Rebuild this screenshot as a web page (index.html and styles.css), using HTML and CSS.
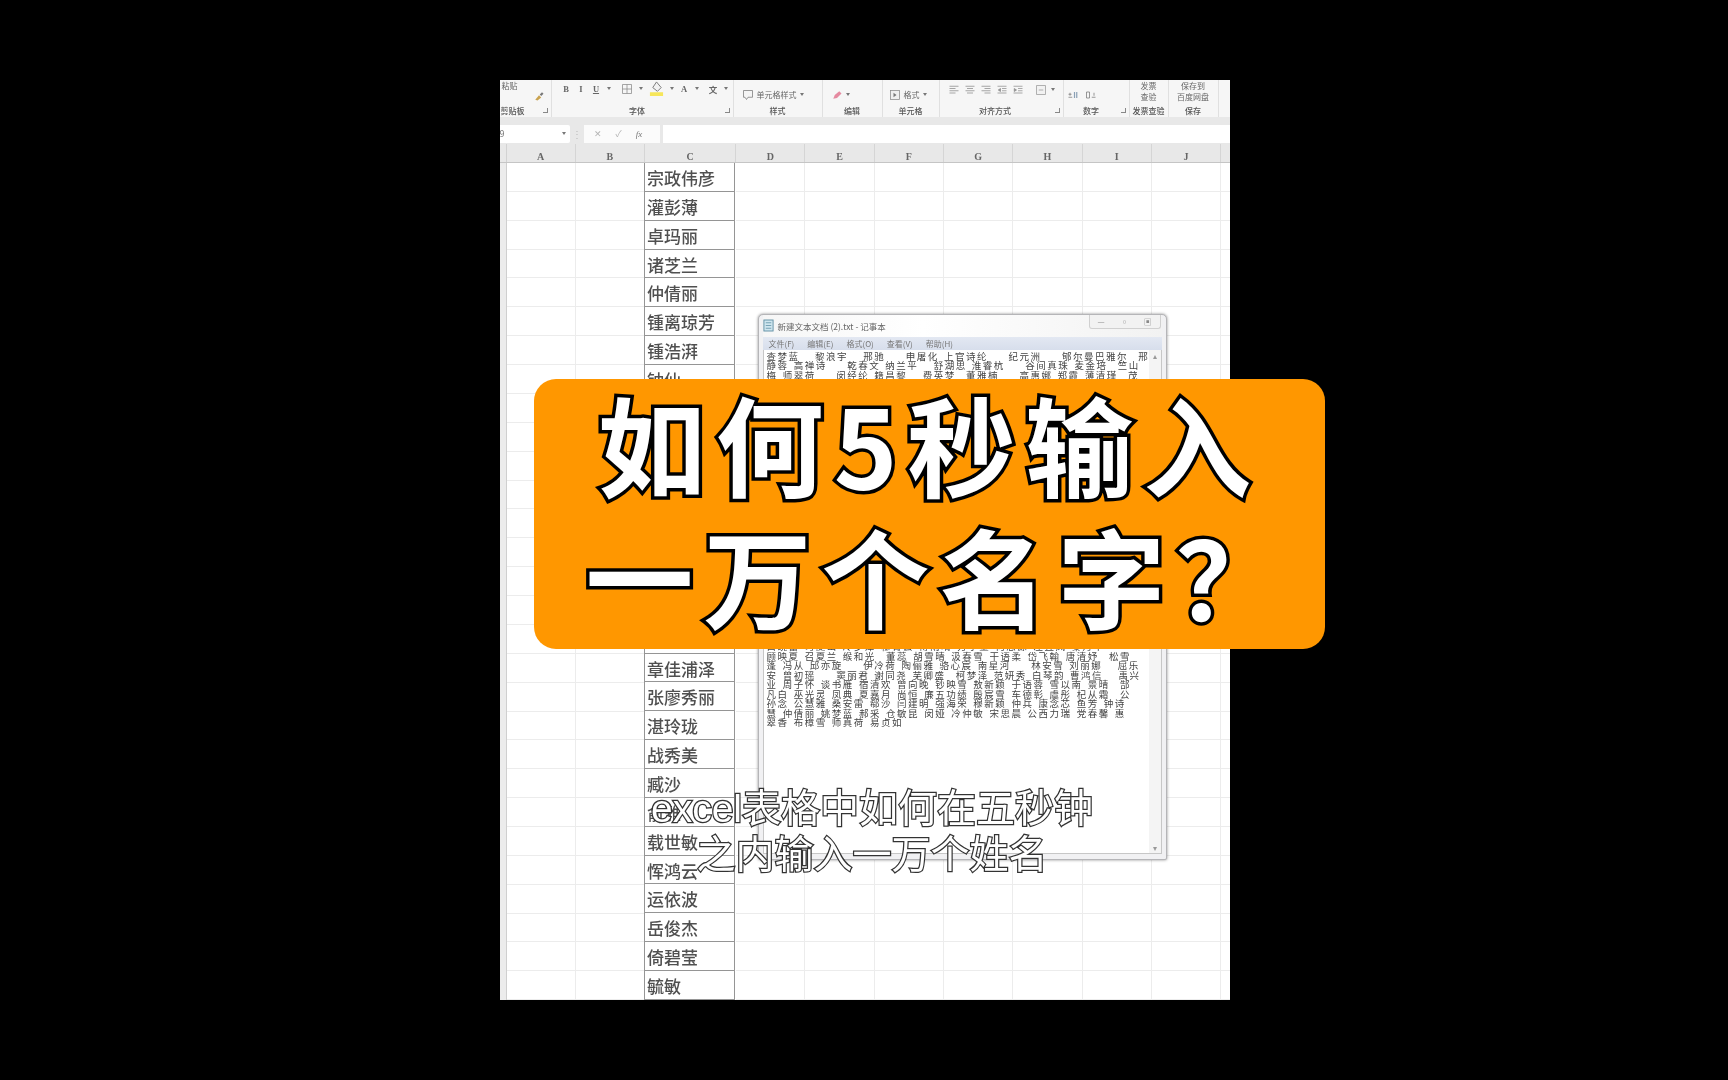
FILE: index.html
```html
<!DOCTYPE html>
<html lang="zh-CN">
<head>
<meta charset="utf-8">
<title>如何5秒输入一万个名字？</title>
<link rel="stylesheet" href="styles.css">
</head>
<body>
<main class="stage">
  <section class="screen">
    <div class="ribbon">
      <div class="group g-clip">
        <div class="tools"><span class="mini paste">粘贴</span>
          <svg class="ic brush" viewBox="0 0 16 16"><path d="M3 13l5-6 3 3-5 4z" fill="#c9a24e"/><path d="M9 6l3-3 2 2-3 3z" fill="#777"/></svg></div>
        <div class="label">剪贴板<i class="launch"></i></div>
      </div>
      <div class="group g-font">
        <div class="tools font-tools">
          <b class="t">B</b><i class="t">I</i><u class="t">U</u><span class="drop"></span>
          <svg class="ic grid-ic" viewBox="0 0 16 16"><path d="M2 2h12v12H2zM8 2v12M2 8h12" fill="none" stroke="#8a8a8a"/></svg><span class="drop"></span>
          <svg class="ic bucket" viewBox="0 0 16 16"><path d="M8 1l5 6-4 4-5-4z" fill="#f2f2f2" stroke="#777"/><rect x="1" y="12" width="14" height="4" fill="#f6e65a"/></svg><span class="drop"></span>
          <b class="t">A</b><span class="drop"></span>
          <span class="t wen">文</span><span class="drop"></span>
        </div>
        <div class="label">字体<i class="launch"></i></div>
      </div>
      <div class="group g-style">
        <div class="tools"><svg class="ic" viewBox="0 0 16 16"><path d="M2 2h12v9H8l-2 3-2-3H2z" fill="#f4f4f4" stroke="#777"/></svg><span class="mini">单元格样式</span><span class="drop"></span></div>
        <div class="label">样式</div>
      </div>
      <div class="group g-edit">
        <div class="tools"><svg class="ic" viewBox="0 0 16 16"><path d="M3 13l2-5 6-5 3 3-6 6z" fill="#e58aa0"/></svg><span class="drop"></span></div>
        <div class="label">编辑</div>
      </div>
      <div class="group g-cell">
        <div class="tools"><svg class="ic" viewBox="0 0 16 16"><rect x="2" y="2" width="12" height="12" fill="#eee" stroke="#888"/><path d="M6 5l4 3-4 3z" fill="#777"/></svg><span class="mini">格式</span><span class="drop"></span></div>
        <div class="label">单元格</div>
      </div>
      <div class="group g-align">
        <div class="tools align-tools">
          <svg class="ic" viewBox="0 0 16 16"><path d="M2 3h12M2 6h8M2 9h12M2 12h8" stroke="#a5a5a5" stroke-width="1.4"/></svg>
          <svg class="ic" viewBox="0 0 16 16"><path d="M2 3h12M4 6h8M2 9h12M4 12h8" stroke="#a5a5a5" stroke-width="1.4"/></svg>
          <svg class="ic" viewBox="0 0 16 16"><path d="M2 3h12M6 6h8M2 9h12M6 12h8" stroke="#a5a5a5" stroke-width="1.4"/></svg>
          <svg class="ic" viewBox="0 0 16 16"><path d="M2 3h12M8 6h6M8 9h6M2 12h12M6 6l-3 2 3 2z" stroke="#8f8f8f" fill="#8f8f8f"/></svg>
          <svg class="ic" viewBox="0 0 16 16"><path d="M2 3h12M8 6h6M8 9h6M2 12h12M3 6l3 2-3 2z" stroke="#8f8f8f" fill="#8f8f8f"/></svg>
          <svg class="ic merge" viewBox="0 0 16 16"><path d="M2 2h12v12H2zM5 8h6" fill="#f2f2f2" stroke="#999"/></svg><span class="drop"></span>
        </div>
        <div class="label">对齐方式<i class="launch"></i></div>
      </div>
      <div class="group g-num">
        <div class="tools num-tools">
          <svg class="ic" viewBox="0 0 16 16"><path d="M2 11h5M4 5v4M2 7h4" stroke="#777" fill="none"/><path d="M10 4v8M13 4v8" stroke="#8aa0b5" stroke-width="1.6"/></svg>
          <svg class="ic" viewBox="0 0 16 16"><path d="M2 4h4v8H2zM9 11h5M12 5v4" stroke="#777" fill="none"/></svg>
        </div>
        <div class="label">数字<i class="launch"></i></div>
      </div>
      <div class="group g-inv">
        <div class="tools stacked"><span class="mini">发票</span><span class="mini">查验</span></div>
        <div class="label">发票查验</div>
      </div>
      <div class="group g-save">
        <div class="tools stacked"><span class="mini">保存到</span><span class="mini">百度网盘</span></div>
        <div class="label">保存</div>
      </div>
    </div>

    <div class="formula">
      <div class="namebox">9<span class="drop"></span></div>
      <div class="fx-sep">⋮</div>
      <div class="fx-btns"><span>✕</span><span>✓</span><em>fx</em></div>
      <div class="fx-input"></div>
    </div>

    <div class="headers">
      <span class="corner"></span>
      <span class="h">A</span><span class="h">B</span><span class="h hc">C</span><span class="h">D</span><span class="h">E</span><span class="h">F</span><span class="h">G</span><span class="h">H</span><span class="h">I</span><span class="h">J</span>
    </div>

    <div class="sheet">
      <div class="rowhead"></div>
      <div class="col"></div>
      <div class="col"></div>
      <div class="names">
        <div>宗政伟彦</div><div>灌彭薄</div><div>卓玛丽</div><div>诸芝兰</div><div>仲倩丽</div><div>锺离琼芳</div><div>锺浩湃</div><div>钟仙</div>
        <div></div><div></div><div></div><div></div><div></div><div></div><div></div><div></div><div></div>
        <div>章佳浦泽</div><div>张廖秀丽</div><div>湛玲珑</div><div>战秀美</div><div>臧沙</div><div>俞雅</div><div>载世敏</div><div>恽鸿云</div><div>运依波</div><div>岳俊杰</div><div>倚碧莹</div><div>毓敏</div>
      </div>
      <div class="col"></div><div class="col"></div><div class="col"></div><div class="col"></div><div class="col"></div><div class="col"></div><div class="col"></div><div class="col"></div>
    </div>

    <div class="notepad">
      <div class="np-title">
        <svg class="np-icon" viewBox="0 0 12 14"><rect x="1" y="1" width="10" height="12" fill="#cfe6ef" stroke="#5e8ea3"/><path d="M3 4h6M3 7h6M3 10h6" stroke="#6f9cb0"/></svg>
        <span>新建文本文档 (2).txt - 记事本</span>
        <div class="np-ctrl"><span>—</span><span>▫</span><span>▣</span></div>
      </div>
      <div class="np-menu"><span>文件(F)</span><span>编辑(E)</span><span>格式(O)</span><span>查看(V)</span><span>帮助(H)</span></div>
      <div class="np-client">
        <div class="np-text">
          <p class="np-top">查梦蓝   黎浪宇   邢驰    申屠化 上官诗纶    纪元洲    郇尔曼巴雅尔  邢
静蓉 高禅诗    乾春文 纳兰平   舒湖思 淮睿杭    谷间真珠 麦金培  竺山
梅 师翠荷    闵经纶 籍昌黎   费英梦  董雅楠    高惠娜 郑霞 薄清瑾  茂</p>
          <p class="np-bottom">白晓蕾 习夏山 冷梦泽 穆青云 傅雨晴 方子墨 何思源 左丘岚 秦月华
顾映夏 召夏兰 缑和光  董蕊 胡雪晴 汲春雪 干语柔 岱飞翰 唐清妤  松雪
蓬 冯从 邱亦旋    伊冷荷 陶俪雅 骆心宸 南星河    林安雪 刘丽娜   屈乐
安 曾初瑶    窦丽君 谢同尧 芜卿盛  柯梦泽 范妍秀 白琴韵 曹鸿信   禹兴
业 周子怀 谈书雁 宿清欢 曾向晚 钞映雪 敖新颖 于语蓉 雪以南 景晴  郜
凡白 巫光灵 凤典 夏嘉月 尚恒 廉五功绩 殷宸雪 车德彰 虞彤 杞从霜  公
孙念 公慧雅 桑安雷 郗沙 闫建明 强海荣 穆新颖 仲兵 康念芯 鱼芳 钟诗
慧 仲倩丽 姚梦蓝 郝采 仓敏昆 闵娅 冷仲敏 宋思晨 公西力瑞 党春馨 惠
翠香 布樟雪 师真荷 易贞如</p>
        </div>
        <div class="np-scroll"><span>▴</span><span>▾</span></div>
      </div>
    </div>
  </section>

  <aside class="banner">
    <p>如何5秒输入</p>
    <p class="second">一万个名字？</p>
  </aside>

  <div class="caption">
    <p>excel表格中如何在五秒钟</p>
    <p>之内输入一万个姓名</p>
  </div>
</main>
</body>
</html>
```

FILE: styles.css
```css
* { box-sizing: border-box; margin: 0; padding: 0; }
html, body { background: #000; height: 100%; overflow: hidden; }
body { font-family: "Noto Sans CJK SC", "Liberation Sans", sans-serif; }

.stage { position: relative; width: 1728px; height: 1080px; padding: 79.5px 0 0 499.5px; background: #000; }

.screen { position: relative; width: 730px; height: 920.5px; background: #fff; overflow: hidden; display: flex; flex-direction: column; filter: blur(0.75px); color: #555; }

/* ribbon */
.ribbon { height: 37px; background: #f6f6f6; display: flex; flex: none; }
.group { display: flex; flex-direction: column; border-right: 1px solid #e0e0e0; position: relative; flex: none; }
.g-clip { width: 52px; } .g-font { width: 182px; } .g-style { width: 89px; } .g-edit { width: 60px; }
.g-cell { width: 57px; } .g-align { width: 124px; } .g-num { width: 66px; } .g-inv { width: 39px; } .g-save { width: 50px; }
.tools { height: 24px; display: flex; align-items: center; gap: 3px; padding: 0 10px; white-space: nowrap; overflow: hidden; }
.label { height: 13px; font-size: 8px; line-height: 13px; text-align: center; color: #555; position: relative; white-space: nowrap; font-weight: 500; }
.g-clip .label { text-align: left; padding-left: 1px; }
.g-font .label, .g-num .label { padding-right: 10px; }
.g-align .label { padding-right: 12px; }
.launch { position: absolute; right: 3px; top: 4px; width: 5px; height: 5px; border-right: 1px solid #888; border-bottom: 1px solid #888; }
.mini { font-size: 8px; line-height: 10px; color: #666; }
.ic { width: 12px; height: 12px; flex: none; }
.drop { width: 0; height: 0; border: 2px solid transparent; border-top: 3px solid #777; border-bottom: 0; flex: none; }
.g-clip .tools { padding: 0 6px 0 2px; justify-content: space-between; }
.paste { align-self: flex-start; margin-top: 1px; }
.brush { margin-top: 8px; }
.font-tools { padding: 0 0 6px 10px; gap: 6px; }
.t { font: bold 8.5px "Liberation Serif", serif; color: #666; }
.font-tools .t { width: 9px; text-align: center; }
.grid-ic { margin-left: 4px; }
.wen { font-family: "Noto Sans CJK SC", sans-serif; margin-left: 4px; }
.bucket { width: 15px; height: 15px; }
.g-style .tools { padding: 6px 0 0 8px; }
.g-edit .tools { padding: 6px 0 0 8px; }
.g-cell .tools { padding: 6px 0 0 6px; }
.align-tools { padding: 0 0 4px 8px; gap: 4px; }
.merge { margin-left: 7px; }
.num-tools { padding: 6px 0 0 3px; gap: 6px; }
.stacked { flex-direction: column; gap: 1px; padding: 0; height: 24px; justify-content: center; }

/* formula bar */
.formula { height: 27.5px; flex: none; background: #e8e8e8; padding: 8px 0 0; display: flex; gap: 0; }
.namebox { width: 70px; height: 18.5px; background: #fff; font-size: 9px; line-height: 18px; color: #777; display: flex; justify-content: space-between; align-items: center; padding: 0 4px 0 0; border-radius: 0 2px 2px 0; }
.fx-sep { width: 14px; text-align: center; font-size: 10px; line-height: 18px; color: #bbb; }
.fx-btns { width: 76px; height: 18.5px; background: #fbfbfb; display: flex; gap: 14px; align-items: center; padding-left: 10px; font-size: 9px; color: #b5b5b5; }
.fx-btns em { color: #777; font-family: "Liberation Serif", serif; }
.fx-input { flex: 1; height: 18.5px; margin-left: 3px; background: #fff; }

/* column headers */
.headers { height: 19px; flex: none; display: flex; background: #e8e8e8; border-bottom: 1px solid #c5c5c5; }
.corner { width: 7px; flex: none; border-right: 1px solid #d2d2d2; }
.h { width: 69.3px; flex: none; font: bold 10px/26px "Liberation Serif", serif; color: #666; text-align: center; border-right: 1px solid #d5d5d5; }
.hc { width: 91px; }

/* sheet */
.sheet { flex: 1; display: flex; min-height: 0; --row: 28.87px; }
.rowhead { width: 7px; flex: none; background: #ececec; border-right: 1px solid #cfcfcf; }
.col { width: 69.3px; flex: none; border-right: 1px solid #ececec; background: repeating-linear-gradient(to bottom, transparent 0, transparent calc(var(--row) - 1px), #ececec calc(var(--row) - 1px), #ececec var(--row)); }
.names { width: 91px; flex: none; border-left: 1.5px solid #959595; border-right: 1.5px solid #959595; margin-left: -1px; margin-right: 1px; }
.names div { height: var(--row); border-bottom: 1.5px solid #959595; font-size: 17px; line-height: 30px; padding-left: 2px; color: #505050; white-space: nowrap; font-weight: 500; }

/* notepad */
.notepad { position: absolute; left: 258px; top: 234px; width: 409px; height: 546px; background: #f1f1f3; border: 1px solid #b5b5b8; border-radius: 5px 5px 2px 2px; box-shadow: 0 0 3px rgba(0,0,0,.45); padding: 0 4px 5px; display: flex; flex-direction: column; }
.np-title { height: 22px; flex: none; display: flex; align-items: center; gap: 4px; font-size: 8.5px; color: #666; position: relative; background: linear-gradient(90deg, #f6f6f6 0, #fff 40%, #f2f2f2 100%); }
.np-icon { width: 11px; height: 13px; flex: none; }
.np-ctrl { position: absolute; right: 1px; top: 0; display: flex; width: 72px; height: 14px; background: #f2f2f2; border: 1px solid #d0d0d0; border-top: 0; border-radius: 0 0 3px 3px; font-size: 8px; line-height: 13px; color: #888; text-align: center; }
.np-ctrl span { flex: 1; }
.np-menu { height: 13px; flex: none; display: flex; gap: 13px; padding-left: 6px; background: linear-gradient(#e3e8f2, #d7deec); font-size: 8px; line-height: 13px; color: #777; }
.np-client { flex: 1; background: #fff; display: flex; border: 1px solid #c7c7c7; border-top: 0; min-height: 0; }
.np-text { flex: 1; padding: 2px 0 0 3px; font-size: 9.5px; line-height: 9.5px; letter-spacing: 1.5px; word-spacing: 1.5px; color: #444; font-weight: 400; overflow: hidden; min-width: 0; }
.np-text p { white-space: pre; }
.np-bottom { margin-top: 262px; }
.np-scroll { width: 12px; flex: none; background: #f4f4f4; display: flex; flex-direction: column; justify-content: space-between; text-align: center; font-size: 8px; color: #999; }

/* orange banner */
.banner { position: absolute; left: 534px; top: 378.5px; width: 791px; height: 270.5px; background: #ff9700; border-radius: 22px; display: flex; flex-direction: column; align-items: center; }
.banner p { font-size: 108px; line-height: 132px; font-weight: 700; letter-spacing: 10px; color: #fff; -webkit-text-stroke: 7px #000; paint-order: stroke fill; white-space: nowrap; }
.banner p:first-child { margin-top: -3px; }
.banner .second { padding-left: 20px; }

/* subtitle */
.caption { position: absolute; left: 499.5px; top: 786px; width: 745px; text-align: center; filter: blur(0.3px); }
.caption p { font-family: "Liberation Sans", "Noto Sans CJK SC", sans-serif; font-size: 39px; line-height: 46px; font-weight: 400; color: #fff; -webkit-text-stroke: 2.5px #333; paint-order: stroke fill; white-space: nowrap; }
```
